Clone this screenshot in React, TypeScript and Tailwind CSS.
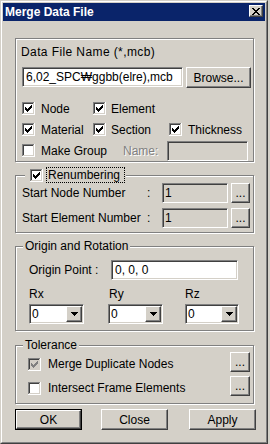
import React from 'react';

const raised =
  'bg-[#d4d0c8] border border-t-white border-l-white border-r-[#404040] border-b-[#404040] shadow-[inset_-1px_-1px_0_#808080]';
const sunken =
  'border border-t-[#808080] border-l-[#808080] border-r-white border-b-white shadow-[inset_1px_1px_0_#404040,inset_-1px_-1px_0_#d4d0c8]';
const group = 'relative border border-[#808080] shadow-[inset_1px_1px_0_#fff,1px_1px_0_#fff]';

function Check({ checked = false, disabled = false }: { checked?: boolean; disabled?: boolean }) {
  const bg = disabled ? '#d4d0c8' : '#ffffff';
  const mark = disabled ? '#808080' : '#000000';
  return (
    <svg width="13" height="13" viewBox="0 0 13 13" shapeRendering="crispEdges" className="block shrink-0">
      <rect width="13" height="13" fill="#fff" />
      <rect width="12" height="12" fill="#808080" />
      <rect x="1" y="1" width="11" height="11" fill="#d4d0c8" />
      <rect x="1" y="1" width="10" height="10" fill="#404040" />
      <rect x="2" y="2" width="9" height="9" fill={bg} />
      {checked && (
        <path
          d="M3 5h1v3H3zM4 6h1v3H4zM5 7h1v3H5zM6 6h1v3H6zM7 5h1v3H7zM8 4h1v3H8zM9 3h1v3H9z"
          fill={mark}
        />
      )}
    </svg>
  );
}

function Combo({ w }: { w: string }) {
  return (
    <div className={`${sunken} bg-white ${w} h-[20px] flex items-stretch p-[1px]`}>
      <div className="flex-1 pl-[1px] flex items-center">0</div>
      <div className={`${raised} w-[16px] flex items-center justify-center`}>
        <svg width="7" height="4" viewBox="0 0 7 4" shapeRendering="crispEdges" className="block">
          <path d="M0 0h7v1H0zM1 1h5v1H1zM2 2h3v1H2zM3 3h1v1H3z" fill="#000" />
        </svg>
      </div>
    </div>
  );
}

function Dots({ className = '' }: { className?: string }) {
  return (
    <div className={`${raised} ${className} flex items-center justify-center`}>...</div>
  );
}

export default function App() {
  return (
    <div className="w-[270px] h-[444px] bg-[#d4d0c8] font-['Liberation_Sans',Arial,sans-serif] text-[12px] leading-[14px] text-black overflow-hidden">
      <div className="w-[268px] h-[444px] border border-t-[#d4d0c8] border-l-[#d4d0c8] border-r-[#404040] border-b-[#404040]">
        <div className="h-full border border-t-white border-l-white border-r-[#808080] border-b-[#808080] p-[1px] flex flex-col">
          {/* Title bar */}
          <div className="h-[18px] shrink-0 bg-[#0a246a] flex items-start pl-[2px] pr-[2px]">
            <span className="font-bold text-white text-[12px] leading-[18px]">Merge Data File</span>
            <div className={`${raised} ml-auto mt-[2px] w-[14px] h-[12px] flex items-center justify-center`}>
              <svg width="8" height="7" viewBox="0 0 8 7" shapeRendering="crispEdges" className="block">
                <path
                  d="M0 0h2v1H0zM6 0h2v1H6zM1 1h2v1H1zM5 1h2v1H5zM2 2h4v1H2zM3 3h2v1H3zM2 4h4v1H2zM1 5h2v1H1zM5 5h2v1H5zM0 6h2v1H0zM6 6h2v1H6z"
                  fill="#000"
                />
              </svg>
            </div>
          </div>

          <div className="ml-[12px] flex flex-col">
            {/* Group 1 */}
            <div className={`${group} mt-[17px] w-[239px] h-[124px]`}>
              <div className="mt-[6px] pl-[5px] h-[14px] tracking-[0.4px]">Data File Name (*,mcb)</div>
              <div className="mt-[8px] flex pl-[6px]">
                <div className={`${sunken} bg-white w-[161px] h-[20px] pl-[3px] flex items-center whitespace-nowrap overflow-hidden`}>
                  6,02_SPC₩ggbb(elre),mcb
                </div>
                <div className={`${raised} ml-[3px] w-[65px] h-[21px] flex items-center justify-center`}>Browse...</div>
              </div>
              <div className="mt-[10px] pl-[6px]">
                <div className="flex h-[21px] items-center">
                  <div className="w-[71px] flex items-center gap-[6px]">
                    <Check checked />
                    <span>Node</span>
                  </div>
                  <div className="w-[76px] flex items-center gap-[5px]">
                    <Check checked />
                    <span>Element</span>
                  </div>
                </div>
                <div className="flex h-[21px] items-center">
                  <div className="w-[71px] flex items-center gap-[6px]">
                    <Check checked />
                    <span>Material</span>
                  </div>
                  <div className="w-[76px] flex items-center gap-[5px]">
                    <Check checked />
                    <span>Section</span>
                  </div>
                  <div className="flex items-center gap-[6px]">
                    <Check checked />
                    <span>Thickness</span>
                  </div>
                </div>
                <div className="flex h-[21px] items-center">
                  <div className="w-[101px] flex items-center gap-[6px]">
                    <Check />
                    <span>Make Group</span>
                  </div>
                  <span className="w-[44px] text-[#808080] [text-shadow:1px_1px_0_#fff]">Name:</span>
                  <div className={`${sunken} bg-[#d4d0c8] w-[81px] h-[20px]`} />
                </div>
              </div>
            </div>

            {/* Group 2 - Renumbering */}
            <div className={`${group} mt-[13px] w-[239px] h-[58px]`}>
              <div className="absolute left-[9px] top-[-9px] bg-[#d4d0c8] flex items-center pl-[5px] pr-[1px] h-[16px]">
                <Check checked />
                <span className="ml-[3px] border border-dotted border-black h-[16px] w-[79px] pl-[1px] flex items-center">
                  Renumbering
                </span>
              </div>
              <div className="mt-[7px] pl-[6px] flex items-center h-[20px]">
                <span className="w-[125px]">Start Node Number</span>
                <span className="w-[15px]">:</span>
                <div className={`${sunken} bg-[#d4d0c8] w-[66px] h-[20px] pl-[2px] flex items-center`}>1</div>
                <Dots className="ml-[3px] w-[19px] h-[20px]" />
              </div>
              <div className="mt-[5px] pl-[6px] flex items-center h-[20px]">
                <span className="w-[125px]">Start Element Number</span>
                <span className="w-[15px]">:</span>
                <div className={`${sunken} bg-[#d4d0c8] w-[66px] h-[20px] pl-[2px] flex items-center`}>1</div>
                <Dots className="ml-[3px] w-[19px] h-[20px]" />
              </div>
            </div>

            {/* Group 3 - Origin and Rotation */}
            <div className={`${group} mt-[13px] w-[239px] h-[85px]`}>
              <div className="absolute left-[7px] top-[-8px] bg-[#d4d0c8] px-[2px] h-[14px]">Origin and Rotation</div>
              <div className="mt-[13px] pl-[13px] flex items-center h-[20px]">
                <span className="w-[82px]">Origin Point :</span>
                <div className={`${sunken} bg-white w-[127px] h-[20px] pl-[3px] flex items-center`}>0, 0, 0</div>
              </div>
              <div className="mt-[7px] pl-[13px] grid grid-cols-[79px_77px_1fr] h-[14px]">
                <span>Rx</span>
                <span className="pl-[1px]">Ry</span>
                <span>Rz</span>
              </div>
              <div className="mt-[3px] pl-[13px] grid grid-cols-[79px_77px_1fr]">
                <Combo w="w-[55px]" />
                <Combo w="w-[55px]" />
                <Combo w="w-[54px]" />
              </div>
            </div>

            {/* Group 4 - Tolerance */}
            <div className={`${group} mt-[14px] w-[239px] h-[59px]`}>
              <div className="absolute left-[7px] top-[-8px] bg-[#d4d0c8] px-[2px] h-[14px]">Tolerance</div>
              <div className="mt-[6px] flex h-[20px] pl-[12px]">
                <div className="flex items-center pt-[4px] gap-[7px]">
                  <Check checked disabled />
                  <span>Merge Duplicate Nodes</span>
                </div>
                <Dots className="ml-auto mr-[3px] w-[20px] h-[20px]" />
              </div>
              <div className="mt-[4px] flex h-[20px] pl-[12px]">
                <div className="flex items-center pt-[4px] gap-[7px]">
                  <Check />
                  <span>Intersect Frame Elements</span>
                </div>
                <Dots className="ml-auto mr-[3px] w-[20px] h-[20px]" />
              </div>
            </div>

            {/* Buttons */}
            <div className="mt-[5px] flex">
              <div className="border border-black w-[67px] h-[21px]">
                <div className={`${raised} w-full h-full flex items-center justify-center`}>OK</div>
              </div>
              <div className={`${raised} ml-[19px] w-[67px] h-[21px] flex items-center justify-center`}>Close</div>
              <div className={`${raised} ml-[21px] w-[67px] h-[21px] flex items-center justify-center`}>Apply</div>
            </div>
          </div>
        </div>
      </div>
    </div>
  );
}
